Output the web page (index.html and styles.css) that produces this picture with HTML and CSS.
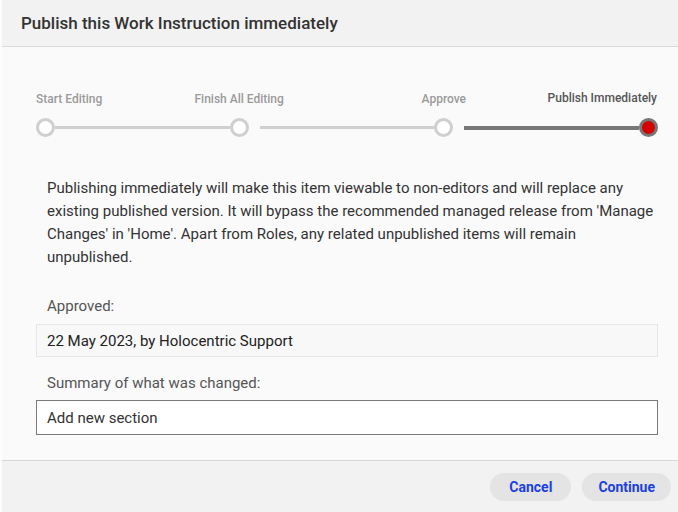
FILE: index.html
```html
<!DOCTYPE html>
<html lang="en">
<head>
<meta charset="utf-8">
<title>Publish this Work Instruction immediately</title>
<link rel="stylesheet" href="styles.css">
</head>
<body>
<div class="dialog">
  <header class="dialog-header">
    <h1 class="dialog-title">Publish this Work Instruction immediately</h1>
  </header>
  <main class="dialog-body">
    <div class="stepper">
      <div class="step-label start">Start Editing</div>
      <div class="step-label center col-c2"><span>Finish All Editing</span></div>
      <div class="step-label center col-c3"><span>Approve</span></div>
      <div class="step-label end active">Publish Immediately</div>

      <div class="dot col-c1"></div>
      <div class="track col-t1"></div>
      <div class="dot col-c2"></div>
      <div class="track col-t2"></div>
      <div class="dot col-c3"></div>
      <div class="track done col-t3"></div>
      <div class="dot current col-c4"></div>
    </div>

    <p class="info">Publishing immediately will make this item viewable to non-editors and will replace any existing published version. It will bypass the recommended managed release from 'Manage Changes' in 'Home'. Apart from Roles, any related unpublished items will remain unpublished.</p>

    <div class="field-label">Approved:</div>
    <div class="readonly-box">22 May 2023, by Holocentric Support</div>

    <div class="field-label second">Summary of what was changed:</div>
    <div class="text-input">Add new section</div>
  </main>
  <footer class="dialog-footer">
    <button class="btn btn-cancel">Cancel</button>
    <button class="btn btn-continue">Continue</button>
  </footer>
</div>
</body>
</html>
```
FILE: styles.css
```css
html, body {
  margin: 0;
  padding: 0;
  height: 100%;
}
body {
  background: #fdfdfd;
  font-family: Roboto, "Liberation Sans", Arial, sans-serif;
  color: #333;
}
.dialog {
  margin-left: 2px;
  height: 100vh;
  display: flex;
  flex-direction: column;
  background: #fafafa;
}
.dialog-header {
  height: 46px;
  background: #f2f2f2;
  border-bottom: 1px solid #d9d9d9;
  display: flex;
  align-items: center;
  padding-left: 19px;
  flex: none;
}
.dialog-title {
  margin: 0;
  font-size: 17px;
  font-weight: 500;
  color: #333;
  line-height: 20px;
  padding-bottom: 1px;
}
.dialog-body {
  flex: 1;
  padding: 45px 20px 24px 34px;
  display: flex;
  flex-direction: column;
}
.stepper {
  display: grid;
  grid-template-columns: 19px 1fr 19px 11px 1fr 19px 11px 1fr 19px;
  grid-template-rows: 14px 19px;
  row-gap: 12px;
  align-items: center;
}
.step-label {
  grid-row: 1;
  font-size: 12px;
  line-height: 14px;
  font-weight: 500;
  color: #9a9a9a;
  white-space: nowrap;
}
.step-label.start {
  grid-column: 1 / 3;
}
.step-label.center {
  display: flex;
  justify-content: center;
}
.step-label.end {
  grid-column: 8 / 10;
  justify-self: end;
  margin-top: -3px;
  margin-right: 1px;
}
.step-label.active {
  color: #555;
}
.col-c1 { grid-column: 1; }
.col-t1 { grid-column: 2; }
.col-c2 { grid-column: 3; }
.col-t2 { grid-column: 5; }
.col-c3 { grid-column: 6; }
.col-t3 { grid-column: 8; }
.col-c4 { grid-column: 9; }
.dot {
  grid-row: 2;
  width: 19px;
  height: 19px;
  box-sizing: border-box;
  border: 3px solid #cfcfcf;
  border-radius: 50%;
  background: #fff;
}
.dot.current {
  border-color: #777;
  background: #d50000;
}
.track {
  grid-row: 2;
  height: 3px;
  background: #d0d0d0;
}
.track.done {
  height: 4px;
  background: #777;
}
.info {
  margin: 40px 0 0;
  padding: 0 0 0 11px;
  font-size: 15px;
  line-height: 23px;
  color: #333;
}
.field-label {
  margin-top: 27px;
  padding-left: 11px;
  font-size: 15px;
  line-height: 20px;
  color: #555;
}
.field-label.second {
  margin-top: 16px;
}
.readonly-box {
  margin-top: 8px;
  height: 33px;
  box-sizing: border-box;
  border: 1px solid #e6e6e6;
  background: #f8f8f8;
  padding: 0 10px;
  display: flex;
  align-items: center;
  font-size: 15px;
  color: #222;
}
.text-input {
  margin-top: 7px;
  height: 35px;
  box-sizing: border-box;
  border: 1px solid #7a7a7a;
  background: #fff;
  padding: 0 10px;
  display: flex;
  align-items: center;
  font-size: 15px;
  color: #333;
}
.dialog-footer {
  flex: none;
  height: 52px;
  box-sizing: border-box;
  border-top: 1px solid #d6d6d6;
  background: #f2f2f2;
  display: flex;
  justify-content: flex-end;
  align-items: flex-start;
  gap: 11px;
  padding: 12px 7px 0 0;
}
.btn {
  height: 28px;
  border: none;
  border-radius: 14px;
  background: #e4e4e4;
  color: #1b3fe0;
  font-family: Roboto, "Liberation Sans", Arial, sans-serif;
  font-size: 14px;
  font-weight: 700;
  cursor: pointer;
}
.btn-cancel {
  padding: 0 19px;
}
.btn-continue {
  padding: 0 16px;
}
```
